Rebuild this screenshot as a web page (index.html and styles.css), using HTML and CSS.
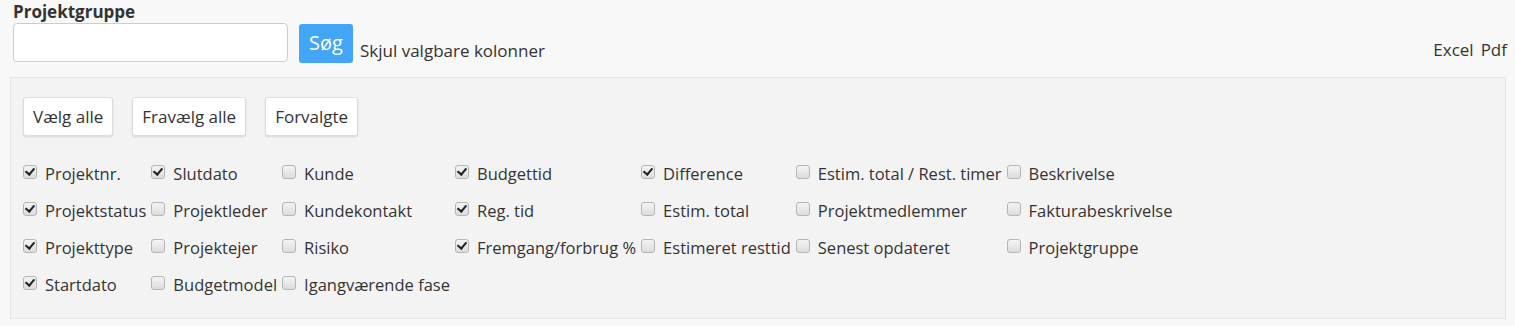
FILE: index.html
```html
<!DOCTYPE html>
<html lang="da">
<head>
<meta charset="utf-8">
<title>Projekter</title>
<link rel="stylesheet" href="styles.css">
</head>
<body>
<div class="top">
  <label class="field-label" for="pg">Projektgruppe</label>
  <div class="search-row">
    <input id="pg" class="search-input" type="text">
    <button class="btn-primary" type="button">Søg</button>
    <a class="toggle-link">Skjul valgbare kolonner</a>
    <div class="exports">
      <a class="export">Excel</a>
      <a class="export">Pdf</a>
    </div>
  </div>
</div>
<div class="panel">
  <div class="panel-buttons">
    <button class="btn" type="button">Vælg alle</button>
    <button class="btn" type="button">Fravælg alle</button>
    <button class="btn" type="button">Forvalgte</button>
  </div>
  <div class="columns">
    <div class="col">
      <label class="opt"><span class="cb checked"></span>Projektnr.</label>
      <label class="opt"><span class="cb checked"></span>Projektstatus</label>
      <label class="opt"><span class="cb checked"></span>Projekttype</label>
      <label class="opt"><span class="cb checked"></span>Startdato</label>
    </div>
    <div class="col">
      <label class="opt"><span class="cb checked"></span>Slutdato</label>
      <label class="opt"><span class="cb"></span>Projektleder</label>
      <label class="opt"><span class="cb"></span>Projektejer</label>
      <label class="opt"><span class="cb"></span>Budgetmodel</label>
    </div>
    <div class="col">
      <label class="opt"><span class="cb"></span>Kunde</label>
      <label class="opt"><span class="cb"></span>Kundekontakt</label>
      <label class="opt"><span class="cb"></span>Risiko</label>
      <label class="opt"><span class="cb"></span>Igangværende fase</label>
    </div>
    <div class="col">
      <label class="opt"><span class="cb checked"></span>Budgettid</label>
      <label class="opt"><span class="cb checked"></span>Reg. tid</label>
      <label class="opt"><span class="cb checked"></span>Fremgang/forbrug %</label>
    </div>
    <div class="col">
      <label class="opt"><span class="cb checked"></span>Difference</label>
      <label class="opt"><span class="cb"></span>Estim. total</label>
      <label class="opt"><span class="cb"></span>Estimeret resttid</label>
    </div>
    <div class="col">
      <label class="opt"><span class="cb"></span>Estim. total / Rest. timer</label>
      <label class="opt"><span class="cb"></span>Projektmedlemmer</label>
      <label class="opt"><span class="cb"></span>Senest opdateret</label>
    </div>
    <div class="col">
      <label class="opt"><span class="cb"></span>Beskrivelse</label>
      <label class="opt"><span class="cb"></span>Fakturabeskrivelse</label>
      <label class="opt"><span class="cb"></span>Projektgruppe</label>
    </div>
  </div>
</div>
</body>
</html>
```
FILE: styles.css
```css
html, body {
  margin: 0;
  padding: 0;
  background: #f8f8f8;
}
body {
  font-family: "Open Sans", "Liberation Sans", sans-serif;
  font-size: 17px;
  color: #333;
}
.top {
  padding: 1px 8px 0 13px;
}
.field-label {
  display: block;
  font-weight: 700;
  font-size: 17px;
  line-height: 21px;
  color: #333;
}
.search-row {
  display: flex;
  align-items: flex-end;
  margin-top: 1px;
}
.search-input {
  width: 275px;
  height: 39px;
  box-sizing: border-box;
  border: 1px solid #ccc;
  border-radius: 4px;
  background: #fff;
  margin: 0;
}
.btn-primary {
  width: 54px;
  height: 39px;
  margin: 1px 0 -1px 11px;
  border: none;
  border-radius: 3px;
  background: #42a5f5;
  color: #fff;
  font-family: inherit;
  font-size: 20px;
  padding: 0 0 3px 0;
}
.toggle-link {
  margin-left: 7px;
  line-height: 22px;
  color: #333;
}
.exports {
  margin-left: auto;
  display: flex;
  gap: 7px;
  font-size: 17px;
  line-height: 22px;
  margin-bottom: 1px;
}
.export {
  color: #333;
}
.panel {
  margin: 15px 9px 0 10px;
  background: #f3f3f3;
  border: 1px solid #e6e6e6;
  padding: 19px 12px 15px 12px;
}
.panel-buttons {
  display: flex;
  gap: 19px;
}
.btn {
  height: 39px;
  padding: 0 9px;
  background: #fff;
  border: 1px solid #ddd;
  border-radius: 3px;
  box-shadow: 0 1px 2px rgba(0,0,0,0.12);
  font-family: inherit;
  font-size: 17px;
  color: #333;
}
.columns {
  display: flex;
  margin-top: 19px;
}
.col {
  display: flex;
  flex-direction: column;
}
.opt {
  display: flex;
  align-items: center;
  height: 37px;
  padding-right: 5px;
  white-space: nowrap;
  font-size: 16.5px;
  color: #333;
}
.cb {
  width: 14px;
  height: 14px;
  box-sizing: border-box;
  border: 1px solid #b5b5b5;
  border-radius: 3px;
  background: linear-gradient(#f4f4f4, #dcdcdc);
  margin: 0 8px 4px 0;
  position: relative;
  flex: none;
}
.cb.checked::after {
  content: "";
  position: absolute;
  left: 3px;
  top: 0px;
  width: 4px;
  height: 7px;
  border: solid #222;
  border-width: 0 2px 2px 0;
  transform: rotate(40deg);
}
```
